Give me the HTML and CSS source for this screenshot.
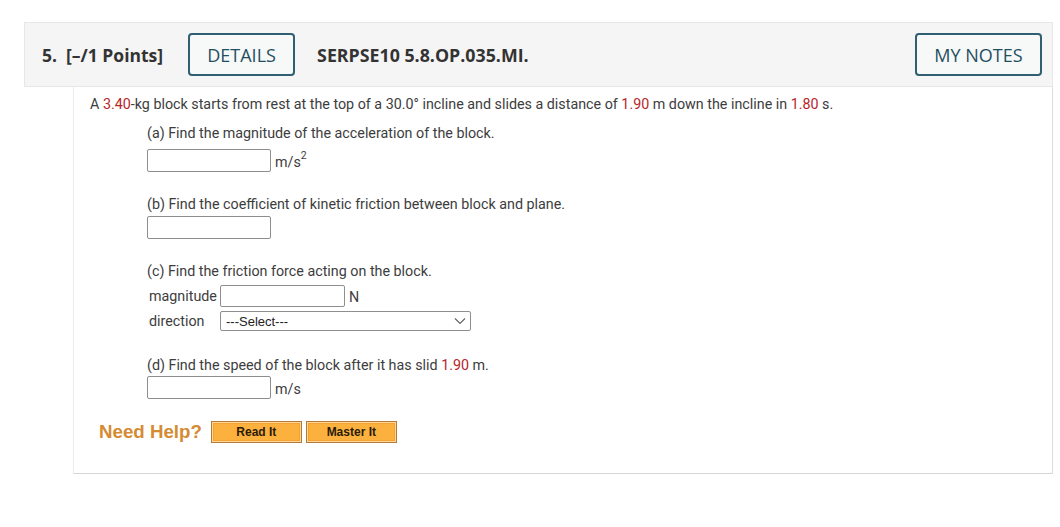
FILE: index.html
```html
<!DOCTYPE html>
<html>
<head>
<meta charset="utf-8">
<link rel="stylesheet" href="styles.css">
</head>
<body>
<div class="wrap">
  <div class="header">
    <span class="qnum">5.</span>
    <span class="points">[–/1 Points]</span>
    <span class="btn details">DETAILS</span>
    <span class="code">SERPSE10 5.8.OP.035.MI.</span>
    <span class="btn notes">MY NOTES</span>
  </div>
  <div class="body">
    <p class="stem">A <span class="red">3.40</span>-kg block starts from rest at the top of a 30.0° incline and slides a distance of <span class="red">1.90</span> m down the incline in <span class="red">1.80</span> s.</p>
    <div class="parts">
      <p class="part pa">(a) Find the magnitude of the acceleration of the block.</p>
      <div class="row ra"><span class="box"></span><span class="unit">m/s<sup>2</sup></span></div>

      <p class="part pb">(b) Find the coefficient of kinetic friction between block and plane.</p>
      <div class="row rb"><span class="box"></span></div>

      <p class="part pc">(c) Find the friction force acting on the block.</p>
      <div class="row rmag"><span class="lbl">magnitude</span><span class="box mag"></span><span class="unit">N</span></div>
      <div class="row rdir"><span class="lbl dirl">direction</span><span class="select"><span>---Select---</span><svg width="12" height="8" viewBox="0 0 12 8"><path d="M1 1.5 L6 6.5 L11 1.5" fill="none" stroke="#666" stroke-width="1.2"/></svg></span></div>

      <p class="part pd">(d) Find the speed of the block after it has slid <span class="red">1.90</span> m.</p>
      <div class="row rd"><span class="box"></span><span class="unit">m/s</span></div>
    </div>
    <div class="help">
      <span class="needhelp">Need Help?</span>
      <span class="hbtn">Read It</span>
      <span class="hbtn">Master It</span>
    </div>
  </div>
</div>
</body>
</html>
```
FILE: styles.css
```css
html, body { margin: 0; padding: 0; background: #fff; }
body { font-family: Roboto, "Liberation Sans", sans-serif; color: #3d3d3d; }
.wrap { padding: 22px 0 0 24px; width: 1029px; }
.header {
  height: 65px; box-sizing: border-box;
  background: #f5f5f5; border: 1px solid #e7e7e7;
  display: flex; align-items: center;
  padding: 0 10px 0 17px;
  font-family: "Open Sans", sans-serif; font-size: 17.5px; color: #333;
}
.qnum { font-weight: 700; margin-right: 9px; }
.points { font-weight: 700; margin-right: 25px; }
.btn {
  box-sizing: border-box; height: 43px;
  display: inline-flex; align-items: center; justify-content: center;
  border: 2px solid #2f5f70; border-radius: 4px;
  color: #1f4f62; font-size: 18px; font-weight: 500; background: #f7f8f8;
}
.details { width: 107px; margin-right: 22px; }
.code { font-weight: 700; color: #333; font-size: 17.8px; }
.notes { width: 127px; margin-left: auto; }
.body {
  margin-left: 49px;
  border-left: 1px solid #ececec; border-right: 1px solid #dcdcdc; border-bottom: 1px solid #d6d6d6;
  padding: 7px 0 30px 16px;
  font-size: 14.3px;
}
p { margin: 0; }
.stem { line-height: 20px; }
.red { color: #b8262b; }
.parts { margin-left: 57px; }
.part { line-height: 20px; }
.pa { margin-top: 9px; }
.pb { margin-top: 22px; }
.pc { margin-top: 22px; }
.pd { margin-top: 24px; }
.row { display: flex; align-items: center; }
.ra { margin-top: 6px; height: 23px; }
.rb { margin-top: 2px; height: 23px; }
.rmag { margin-top: 4px; height: 22px; }
.rdir { margin-top: 4px; height: 20px; }
.rd { margin-top: 1px; height: 23px; }
.box {
  display: inline-block; box-sizing: border-box; width: 124px; height: 23px;
  border: 1px solid #8e8e8e; border-radius: 2px; background: #fff;
}
.box.mag { width: 125px; height: 22px; }
.unit { margin-left: 4px; position: relative; top: 1px; }
.unit sup { font-size: 10.5px; vertical-align: 8px; line-height: 0; }
.lbl { margin-left: 2px; width: 71px; }
.dirl { width: 71px; }
.select {
  box-sizing: border-box; width: 251px; height: 20px;
  border: 1px solid #8e8e8e; border-radius: 2px;
  display: flex; align-items: center; justify-content: space-between;
  padding: 0 4px 0 5px; font-size: 13px; color: #222;
  font-family: "Liberation Sans", Arial, sans-serif;
}
.help { margin-top: 22px; margin-left: 9px; display: flex; align-items: center; height: 22px; }
.needhelp {
  font-family: "Liberation Sans", Arial, sans-serif; font-weight: 700; font-size: 18.7px;
  color: #d58b33; margin-right: 9px;
}
.hbtn {
  box-sizing: border-box; width: 91px; height: 22px; margin-right: 4px;
  display: inline-flex; align-items: center; justify-content: center;
  background: #fcb13f; border: 1px solid #b27a3a;
  box-shadow: inset 0 0 0 1px #ffd89a, inset 0 0 0 2px #f4a233;
  font-family: "Liberation Sans", Arial, sans-serif; font-weight: 700; font-size: 12px; color: #2a1a08;
}
```
